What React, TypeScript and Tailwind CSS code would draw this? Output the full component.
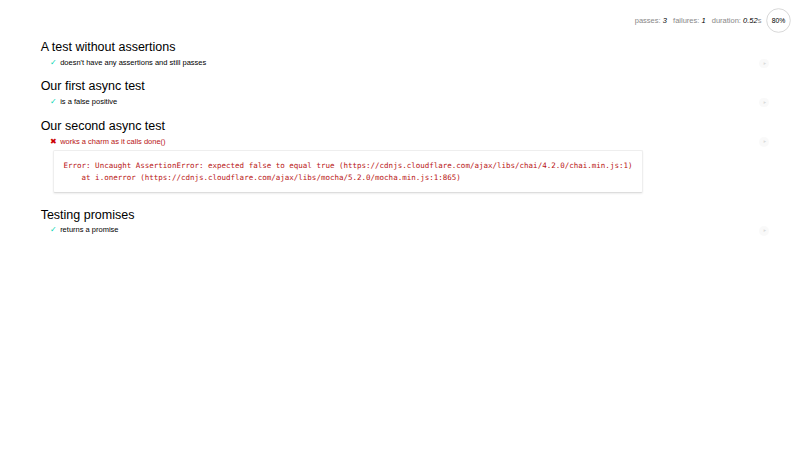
const suites = [
  {
    title: "A test without assertions",
    tests: [{ title: "doesn't have any assertions and still passes", pass: true }],
  },
  {
    title: "Our first async test",
    tests: [{ title: "is a false positive", pass: true }],
  },
  {
    title: "Our second async test",
    tests: [
      {
        title: "works a charm as it calls done()",
        pass: false,
        error: [
          "Error: Uncaught AssertionError: expected false to equal true (https://cdnjs.cloudflare.com/ajax/libs/chai/4.2.0/chai.min.js:1)",
          "    at i.onerror (https://cdnjs.cloudflare.com/ajax/libs/mocha/5.2.0/mocha.min.js:1:865)",
        ],
      },
    ],
  },
  {
    title: "Testing promises",
    tests: [{ title: "returns a promise", pass: true }],
  },
];

type Test = { title: string; pass: boolean; error?: string[] };

function Stats() {
  return (
    <ul className="absolute top-[8.4px] right-[9.5px] z-10 flex items-start text-[7.5px] leading-[11.25px] text-[#888]">
      <li className="mx-[3.1px] pt-[6.9px]">
        passes: <em className="text-black">3</em>
      </li>
      <li className="mx-[3.1px] pt-[6.9px]">
        failures: <em className="text-black">1</em>
      </li>
      <li className="mx-[3.1px] pt-[6.9px]">
        duration: <em className="text-black">0.52</em>s
      </li>
      <li className="ml-[1px]">
        <svg width="25" height="25" viewBox="0 0 25 25">
          <circle cx="12.5" cy="12.5" r="11.8" fill="none" stroke="#d4d4d4" strokeWidth="0.9" />
          <text
            x="12.5"
            y="15"
            textAnchor="middle"
            fontSize="6.8"
            fill="#000"
            fontFamily="Liberation Sans, Arial, sans-serif"
          >
            80%
          </text>
        </svg>
      </li>
    </ul>
  );
}

function TestRow({ test }: { test: Test }) {
  return (
    <li className="ml-[9.4px] overflow-hidden">
      <h2
        className={`relative text-[7.5px] leading-[11.25px] font-normal ${
          test.pass ? "text-black" : "text-[#b81414]"
        }`}
      >
        <span
          className={`float-left mr-[3.1px] ${test.pass ? "text-[#00d6b2]" : "text-[#c00]"}`}
        >
          {test.pass ? "✓" : "✖"}
        </span>
        {test.title}
        <a className="absolute top-[1.9px] right-0 block h-[9.4px] w-[9.4px] rounded-full bg-[#eee] text-center text-[9.4px] leading-[9.4px] text-[#888] opacity-30">
          ‣
        </a>
      </h2>
      {test.error && (
        <pre className="float-left clear-left m-[3.1px] whitespace-pre rounded-[2px] border border-[#eee] border-b-[#ddd] p-[9.4px] font-['DejaVu_Sans_Mono',monospace] text-[7.5px] leading-[11.25px] text-[#b81414] shadow-[0_1px_2px_#eee]">
          {test.error.join("\n")}
        </pre>
      )}
    </li>
  );
}

export default function App() {
  return (
    <div className="relative h-[450px] w-[800px] overflow-hidden bg-white font-['Liberation_Sans',Arial,sans-serif] text-black">
      <Stats />
      <div className="px-[31.25px] pt-[28.6px]">
        <ul>
          {suites.map((suite) => (
            <li key={suite.title} className="ml-[9.4px]">
              <h1 className="mt-[9.4px] text-[12.5px] leading-[18.75px] font-normal">
                {suite.title}
              </h1>
              <ul>
                {suite.tests.map((test) => (
                  <TestRow key={test.title} test={test} />
                ))}
              </ul>
            </li>
          ))}
        </ul>
      </div>
    </div>
  );
}
